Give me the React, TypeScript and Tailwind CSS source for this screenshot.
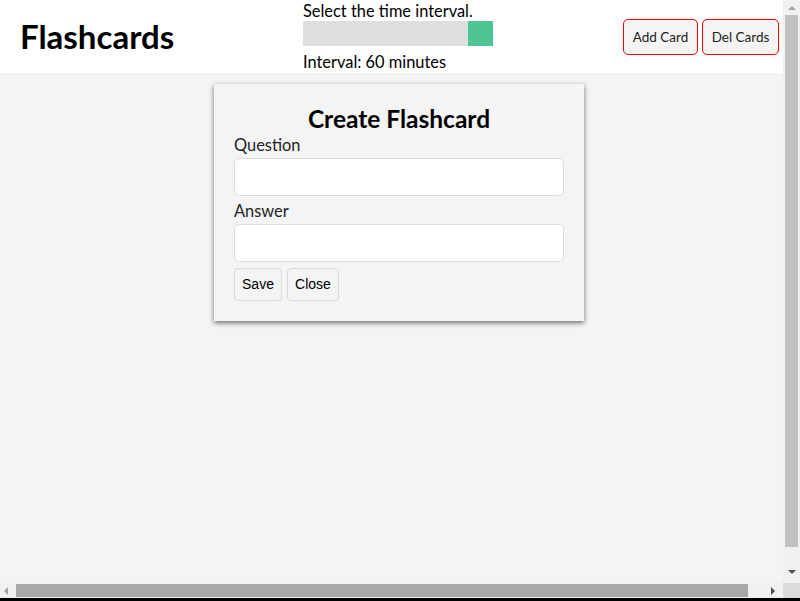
function VScrollbar() {
  return (
    <div className="flex w-[17px] flex-col items-center bg-[#f1f1f1]">
      <div className="mt-[6px] h-0 w-0 border-x-[4px] border-b-[4px] border-x-transparent border-b-[#a3a3a3]" />
      <div className="mt-[5px] h-[532px] w-[13px] bg-[#c1c1c1]" />
      <div className="mt-auto mb-[9px] h-0 w-0 border-x-[4px] border-t-[4px] border-x-transparent border-t-[#505050]" />
    </div>
  );
}

function HScrollbar() {
  return (
    <div className="flex h-[15px] flex-1 items-center bg-[#f1f1f1]">
      <div className="ml-[4px] h-0 w-0 border-y-[4px] border-r-[4px] border-y-transparent border-r-[#a3a3a3]" />
      <div className="ml-[8px] h-[13px] flex-1 bg-[#a8a8a8]" />
      <div className="ml-[23px] mr-[8px] h-0 w-0 border-y-[4px] border-l-[4px] border-y-transparent border-l-[#505050]" />
    </div>
  );
}

export default function App() {
  return (
    <div className="flex h-[601px] w-[800px] flex-col overflow-hidden bg-[#f4f4f4] text-black" style={{ fontFamily: 'Lato, "Noto Sans", sans-serif' }}>
      <div className="flex min-h-0 flex-1">
        <main className="min-w-0 flex-1 overflow-hidden">
          <header className="flex h-[73px] items-start bg-white">
            <h1 className="w-[303px] shrink-0 pl-5 pt-[14px] text-[33px] font-bold leading-[44px]">Flashcards</h1>
            <div className="flex shrink-0 flex-col">
              <p className="text-[16.4px] leading-[21px]">Select the time interval.</p>
              <div className="flex h-[25px] w-[190px] justify-end bg-[#dedede]">
                <div className="h-full w-[25px] bg-[#4fc495]" />
              </div>
              <p className="mt-[5px] text-[16.4px] leading-[22px]">Interval: 60 minutes</p>
            </div>
            <div className="ml-[130px] mt-[19px] flex shrink-0 gap-1">
              <button className="h-[36px] w-[75px] rounded-[5px] border border-[#ff0000] bg-[#f4f4f4] text-[13.5px] text-[#222]">Add Card</button>
              <button className="h-[36px] w-[77px] rounded-[5px] border border-[#ff0000] bg-[#f4f4f4] text-[13.5px] text-[#222]">Del Cards</button>
            </div>
          </header>
          <div className="ml-[214px] mt-[11px] w-[370px] bg-[#f4f4f4] p-5 shadow-[0_2px_5px_rgba(0,0,0,0.55)]">
            <h2 className="text-center text-[24.5px] font-bold leading-[30px]">Create Flashcard</h2>
            <label className="block text-[16.4px] leading-[22px] text-[#222]">Question</label>
            <input className="mt-[2px] block h-[38px] w-[330px] rounded-[5px] border border-[#dcdcdc] bg-white" />
            <label className="mt-[4px] block text-[16.4px] leading-[22px] text-[#222]">Answer</label>
            <input className="mt-[2px] block h-[38px] w-[330px] rounded-[5px] border border-[#dcdcdc] bg-white" />
            <div className="mt-[6px] flex gap-[5px]" style={{ fontFamily: '"Liberation Sans", Arial, sans-serif' }}>
              <button className="h-[33px] w-[48px] rounded-[4px] border border-[#d8d8d8] bg-[#f4f4f4] text-[14px]">Save</button>
              <button className="h-[33px] w-[52px] rounded-[4px] border border-[#d8d8d8] bg-[#f4f4f4] text-[14px]">Close</button>
            </div>
          </div>
        </main>
        <VScrollbar />
      </div>
      <div className="flex h-[15px] shrink-0">
        <HScrollbar />
        <div className="w-[17px] bg-[#dcdcdc]" />
      </div>
      <div className="h-[3px] shrink-0 bg-black" />
    </div>
  );
}
